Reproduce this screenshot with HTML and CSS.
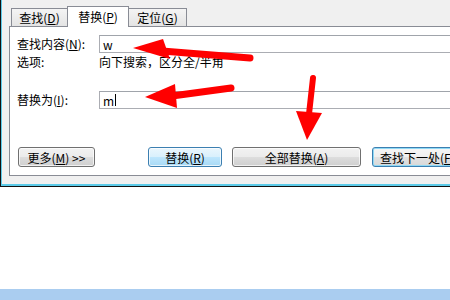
FILE: index.html
```html
<!DOCTYPE html>
<html lang="zh-CN">
  <head>
    <meta charset="UTF-8" />
    <title>查找和替换</title>
    <link rel="stylesheet" href="styles.css">
  </head>
  <body>
    <div class="window">
      <div class="window-inner">
        <div class="tabs">
          <div class="tab tab-find">查找(<u>D</u>)</div>
          <div class="tab tab-replace active">替换(<u>P</u>)</div>
          <div class="tab tab-goto">定位(<u>G</u>)</div>
        </div>

        <div class="panel">
          <div class="row">
            <span class="label">查找内容(<u>N</u>):</span>
            <div class="field">w</div>
          </div>
          <div class="row">
            <span class="label">选项:</span>
            <span>向下搜索，区分全/半角</span>
          </div>
          <div class="row row-replace">
            <span class="label">替换为(<u>I</u>):</span>
            <div class="field">m<span class="caret"></span></div>
          </div>

          <div class="buttons">
            <button class="btn btn-more">更多(<u>M</u>) &gt;&gt;</button>
            <button class="btn btn-default btn-one">替换(<u>R</u>)</button>
            <button class="btn btn-all">全部替换(<u>A</u>)</button>
            <button class="btn btn-focus btn-next">查找下一处(<u>F</u>)</button>
          </div>
        </div>
      </div>
    </div>

    <div class="blank"></div>
    <div class="taskbar"></div>

    <!-- red arrows drawn on top of the screenshot -->
    <svg class="arrows" width="450" height="300" viewBox="0 0 450 300">
      <g stroke="#ff0000" stroke-width="7" stroke-linecap="round" fill="none">
        <line x1="162" y1="51" x2="250" y2="58" />
        <line x1="172" y1="96" x2="231" y2="88" />
        <line x1="313" y1="78" x2="309" y2="114" stroke-width="6" />
      </g>
      <g fill="#ff0000">
        <polygon points="133,48 163,39 170,59" />
        <polygon points="145,97 175,84 177,108" />
        <polygon points="296,111 322,113 307,140" />
      </g>
    </svg>
  </body>
</html>
```

FILE: styles.css
```css
body {
  margin: 0;
  width: 450px;
  height: 300px;
  overflow: hidden;
  position: relative;
  background: #fff;
  font-family: "Noto Sans CJK SC", "Liberation Sans", sans-serif;
  font-size: 12px;
  color: #000;
  display: flex;
  flex-direction: column;
}

u {
  text-decoration: underline;
  text-underline-offset: 1px;
}

.window {
  height: 187px;
  flex: none;
  box-sizing: border-box;
  border-left: 1px solid #111;
  border-bottom: 1px solid #111;
  overflow: hidden;
}

.window-inner {
  height: 100%;
  box-sizing: border-box;
  border-left: 1px solid #5ccbe9;
  border-bottom: 2px solid #5ccbe9;
  background: #f0f0f0;
  padding-top: 6px;
}

/* tabs */
.tabs {
  display: flex;
  align-items: flex-end;
  height: 20px;
  padding-left: 9px;
}

.tab {
  box-sizing: border-box;
  height: 18px;
  line-height: 17px;
  text-align: center;
  border: 1px solid #898c95;
  border-bottom: none;
  background: linear-gradient(#f4f4f4, #e4e4e4);
}

.tab-find {
  width: 56px;
}

.tab-replace {
  width: 62px;
}

.tab-goto {
  width: 58px;
  border-left: none;
}

.tab-find {
  border-right: none;
}

.tab.active {
  height: 21px;
  line-height: 19px;
  margin-bottom: -1px;
  background: #fff;
  position: relative;
  z-index: 1;
}

/* panel */
.panel {
  width: 500px;
  height: 150px;
  box-sizing: border-box;
  margin-left: 7px;
  border: 1px solid #898c95;
  border-right: none;
  background: #fff;
  padding: 8px 0 0 7px;
}

.row {
  display: flex;
  align-items: center;
  height: 18px;
  line-height: 16px;
}

.row-replace {
  margin-top: 20px;
}

.label {
  width: 82px;
  flex: none;
}

.field {
  flex: 1;
  height: 18px;
  box-sizing: border-box;
  border: 1px solid #abadb3;
  border-top-color: #a0a4ab;
  padding-left: 3px;
  line-height: 15px;
  display: flex;
  align-items: center;
}

.caret {
  display: inline-block;
  width: 1px;
  height: 12px;
  background: #000;
  margin-left: 1px;
}

/* buttons */
.buttons {
  display: flex;
  margin-top: 38px;
  margin-left: 1px;
}

.btn {
  height: 20px;
  box-sizing: border-box;
  padding: 0;
  font: inherit;
  line-height: 17px;
  color: #000;
  border: 1px solid #707070;
  border-radius: 3px;
  background: linear-gradient(#f2f2f2 0%, #ebebeb 50%, #dddddd 51%, #cfcfcf 100%);
  box-shadow: inset 0 0 0 1px rgba(255, 255, 255, 0.7);
  flex: none;
}

.btn-more {
  width: 77px;
}

.btn-one {
  width: 74px;
  margin-left: 53px;
}

.btn-all {
  width: 129px;
  margin-left: 10px;
}

.btn-next {
  width: 95px;
  margin-left: 11px;
  text-align: left;
  padding-left: 7px;
}

.btn-default {
  border-color: #3c7fb1;
  background: linear-gradient(#eaf6fd 0%, #d9f0fc 50%, #bee6fd 51%, #a7d9f5 100%);
}

.btn-focus {
  border-color: #3c7fb1;
  box-shadow: inset 0 0 0 1px #8fd9f5;
  background: linear-gradient(#f6f6f6 0%, #efefef 50%, #e2e2e2 51%, #d8d8d8 100%);
}

.blank {
  flex: 1;
}

.taskbar {
  height: 11px;
  flex: none;
  background: #aacdf0;
}

.arrows {
  position: absolute;
  left: 0;
  top: 0;
  pointer-events: none;
}
```
